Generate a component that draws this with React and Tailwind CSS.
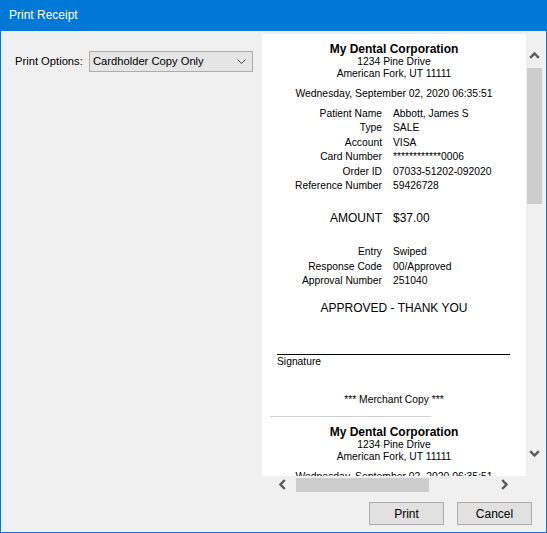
import React from 'react';

const details = [
    ['Patient Name', 'Abbott, James S'],
    ['Type', 'SALE'],
    ['Account', 'VISA'],
    ['Card Number', '************0006'],
    ['Order ID', '07033-51202-092020'],
    ['Reference Number', '59426728'],
];

const response = [
    ['Entry', 'Swiped'],
    ['Response Code', '00/Approved'],
    ['Approval Number', '251040'],
];

// scrollbar arrow glyphs
function Arrow({ dir }) {
    const vertical = dir === 'up' || dir === 'down';
    const pts = {
        up: '1.2,6.8 5.5,2.5 9.8,6.8',
        down: '1.2,1.2 5.5,5.5 9.8,1.2',
        left: '5.8,1 1.5,5.5 5.8,10',
        right: '1.2,1 5.5,5.5 1.2,10',
    };
    return (
        <svg
            width={vertical ? 11 : 7}
            height={vertical ? 8 : 11}
            viewBox={vertical ? '0 0 11 8' : '0 0 7 11'}
            className="shrink-0"
        >
            <polyline points={pts[dir]} fill="none" stroke="#5a5a5a" strokeWidth="2.4" />
        </svg>
    );
}

function Header() {
    return (
        <>
            <div className="text-center font-bold text-[12px] leading-[13px]">My Dental Corporation</div>
            <div className="text-center text-[10.3px] leading-[12px]">1234 Pine Drive</div>
            <div className="text-center text-[10.3px] leading-[12px]">American Fork, UT 11111</div>
            <div className="mt-[8px] text-center text-[10.4px] leading-[12px]">Wednesday, September 02, 2020 06:35:51</div>
        </>
    );
}

function Rows({ rows, className }) {
    return (
        <div className={`grid grid-cols-[120px_1fr] gap-x-[11px] text-[10.3px] leading-[14.4px] ${className}`}>
            {rows.map(([label, value]) => (
                <React.Fragment key={label}>
                    <div className="text-right whitespace-nowrap">{label}</div>
                    <div className="whitespace-nowrap">{value}</div>
                </React.Fragment>
            ))}
        </div>
    );
}

function Receipt() {
    return (
        <div className="pt-[9px] text-black">
            <Header />
            <Rows rows={details} className="mt-[7px]" />

            <div className="mt-[18px] grid grid-cols-[120px_1fr] gap-x-[11px] text-[12px] leading-[14px]">
                <div className="text-right">AMOUNT</div>
                <div>$37.00</div>
            </div>

            <Rows rows={response} className="mt-[20px]" />

            <div className="mt-[12px] text-center text-[12px] leading-[14px]">APPROVED - THANK YOU</div>

            <div className="mt-[39px] ml-[15px] w-[233px] h-px bg-black" />
            <div className="ml-[15px] text-[10.3px] leading-[13px]">Signature</div>

            <div className="mt-[26px] text-center text-[10.3px] leading-[12px]">*** Merchant Copy ***</div>
            <div className="mt-[10px] ml-[8px] w-[161px] h-px bg-[#d0d0d0]" />

            <div className="mt-[9px]">
                <Header />
            </div>
        </div>
    );
}

export default function App() {
    return (
        <div className="w-[547px] h-[533px] bg-[#0078d7] px-px pb-px flex flex-col font-['Liberation_Sans',Arial,sans-serif]">
            <div className="h-[31px] shrink-0 flex items-center pl-[8px] pb-[1px] text-white text-[12px]">
                Print Receipt
            </div>

            <div className="flex-1 bg-[#f0f0f0] flex flex-col">
                <div className="flex pt-[3px]">
                    <div className="w-[261px] shrink-0 pl-[14px] pt-[17px] flex items-start">
                        <div className="h-[21px] w-[74px] flex items-center text-[11.2px] text-black">Print Options:</div>
                        <div className="h-[21px] w-[164px] border border-[#adadad] bg-[#e5e5e5] flex items-center pl-[3px] pr-[6px] text-[11.2px] text-black">
                            <span className="flex-1">Cardholder Copy Only</span>
                            <svg width="9" height="5" viewBox="0 0 9 5">
                                <polyline points="0.5,0.5 4.5,4.5 8.5,0.5" fill="none" stroke="#404040" strokeWidth="1" />
                            </svg>
                        </div>
                    </div>

                    <div className="w-[281px] h-[459px] flex flex-col">
                        <div className="flex h-[442px]">
                            <div className="w-[264px] h-full bg-white overflow-hidden">
                                <Receipt />
                            </div>
                            <div className="w-[17px] h-full flex flex-col items-center">
                                <div className="h-[34px] pt-[17px] flex justify-center">
                                    <Arrow dir="up" />
                                </div>
                                <div className="w-[15px] h-[136px] bg-[#cdcdcd]" />
                                <div className="flex-1" />
                                <div className="mb-[18px]">
                                    <Arrow dir="down" />
                                </div>
                            </div>
                        </div>
                        <div className="flex h-[17px]">
                            <div className="w-[264px] flex items-center">
                                <div className="ml-[17px]">
                                    <Arrow dir="left" />
                                </div>
                                <div className="ml-[10px] w-[133px] h-[14px] bg-[#cdcdcd]" />
                                <div className="flex-1" />
                                <div className="mr-[18px]">
                                    <Arrow dir="right" />
                                </div>
                            </div>
                            <div className="w-[17px]" />
                        </div>
                    </div>
                </div>

                <div className="mt-[9px] flex justify-end gap-[13px] pr-[14px]">
                    <button className="w-[75px] h-[23px] border border-[#adadad] bg-[#e1e1e1] text-[12px] text-black">Print</button>
                    <button className="w-[75px] h-[23px] border border-[#adadad] bg-[#e1e1e1] text-[12px] text-black">Cancel</button>
                </div>
            </div>
        </div>
    );
}
